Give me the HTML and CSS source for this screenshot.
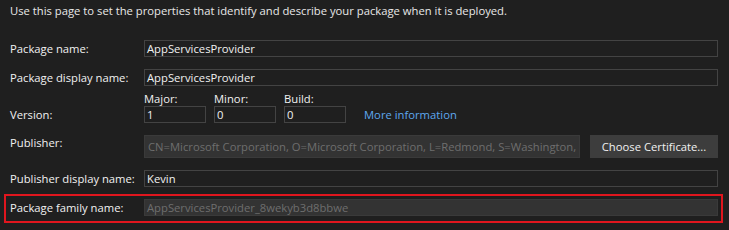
FILE: index.html
```html
<!DOCTYPE html>
<html lang="en">
<head>
<meta charset="utf-8">
<title>Package properties</title>
<link rel="stylesheet" href="styles.css">
</head>
<body>
<div class="page">
  <p class="intro">Use this page to set the properties that identify and describe your package when it is deployed.</p>

  <div class="row row-name">
    <label class="label">Package name:</label>
    <div class="field">AppServicesProvider</div>
  </div>

  <div class="row row-display">
    <label class="label">Package display name:</label>
    <div class="field">AppServicesProvider</div>
  </div>

  <div class="row row-version">
    <label class="label label-version">Version:</label>
    <div class="version">
      <div class="vpart">
        <span class="vlabel">Major:</span>
        <div class="field small">1</div>
      </div>
      <div class="vpart">
        <span class="vlabel">Minor:</span>
        <div class="field small">0</div>
      </div>
      <div class="vpart">
        <span class="vlabel">Build:</span>
        <div class="field small">0</div>
      </div>
      <a class="more" href="#">More information</a>
    </div>
  </div>

  <div class="row row-publisher">
    <label class="label label-top">Publisher:</label>
    <div class="publisher">
      <div class="field disabled tall">CN=Microsoft Corporation, O=Microsoft Corporation, L=Redmond, S=Washington, C=US</div>
      <button class="btn" type="button">Choose Certificate...</button>
    </div>
  </div>

  <div class="row row-pubdisplay">
    <label class="label">Publisher display name:</label>
    <div class="field">Kevin</div>
  </div>

  <div class="row row-family highlight">
    <label class="label">Package family name:</label>
    <div class="field disabled">AppServicesProvider_8wekyb3d8bbwe</div>
  </div>
</div>
</body>
</html>
```

FILE: styles.css
```css
html, body {
  margin: 0;
  padding: 0;
  background: #1f1f1f;
}

body {
  width: 729px;
  height: 230px;
  overflow: hidden;
  font-family: "Open Sans", "Noto Sans", "Liberation Sans", sans-serif;
  font-size: 11.25px;
  color: #f1f1f1;
}

.page {
  display: flex;
  flex-direction: column;
}

.intro {
  margin: 0 11px 0 10px;
  padding-top: 3px;
  line-height: 16px;
  color: #e8e8e8;
}

.row {
  display: grid;
  grid-template-columns: 134px minmax(0, 1fr);
  align-items: center;
  margin: 0 11px 0 10px;
}

.row-name { margin-top: 21px; }
.row-display { margin-top: 12px; }
.row-version { margin-top: 6px; align-items: end; }
.row-publisher { margin-top: 12px; align-items: start; }
.row-pubdisplay { margin-top: 12px; }

.row.highlight {
  margin: 7px 6px 0 4px;
  border: 2px solid #e0161e;
  padding: 3px 3px 5px 4px;
}

.label {
  line-height: 16px;
  white-space: nowrap;
}

.label-version {
  line-height: 17px;
}

.label-top {
  line-height: 16px;
}

.field {
  box-sizing: border-box;
  height: 17px;
  border: 1px solid #434343;
  padding: 0 2px;
  line-height: 15px;
  white-space: nowrap;
  overflow: hidden;
  color: #f1f1f1;
}

.field.disabled {
  background: #333333;
  border-color: #3a3a3a;
  color: #6e6e6e;
}

.field.tall {
  width: 436px;
  height: 23px;
  line-height: 21px;
  padding: 0 3px;
  flex: none;
}

.version {
  display: flex;
  align-items: flex-end;
  gap: 8px;
}

.vpart {
  display: flex;
  flex-direction: column;
}

.vlabel {
  line-height: 14px;
}

.field.small {
  width: 62px;
}

.more {
  margin-left: 10px;
  line-height: 17px;
  color: #5ea8ef;
  text-decoration: none;
}

.publisher {
  display: flex;
  gap: 10px;
}

.btn {
  box-sizing: border-box;
  flex: none;
  width: 128px;
  height: 23px;
  border: none;
  background: #3d3d3d;
  color: #f1f1f1;
  font: inherit;
  padding: 0;
}
```
